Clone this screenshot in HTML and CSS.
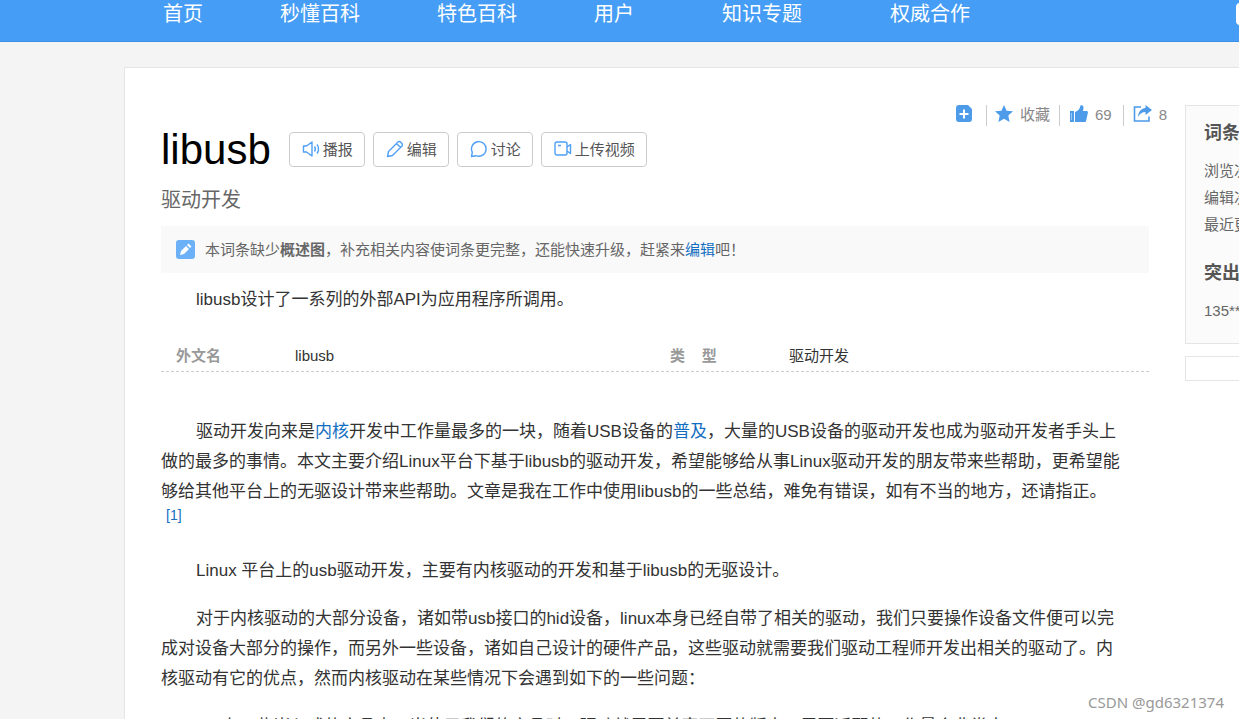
FILE: index.html
```html
<!DOCTYPE html>
<html lang="zh-CN">
<head>
  <meta charset="UTF-8" />
  <meta name="viewport" content="width=device-width, initial-scale=1.0" />
  <title>libusb</title>
  <link rel="stylesheet" href="styles.css">
</head>
<body>
  <header class="header">
    <nav class="nav">
      <a href="#">首页</a>
      <a href="#">秒懂百科</a>
      <a href="#">特色百科</a>
      <a href="#" class="wide">用户</a>
      <a href="#" class="wide">知识专题</a>
      <a href="#">权威合作</a>
    </nav>
    <div class="search"><input type="text" aria-label="搜索"></div>
  </header>

  <div class="page">
    <main class="main">
      <div class="tools">
        <a href="#" class="add" aria-label="添加">
          <svg width="16" height="17" viewBox="0 0 16 17"><path d="M3 0h9l4 4v10a3 3 0 0 1-3 3H3a3 3 0 0 1-3-3V3a3 3 0 0 1 3-3z" fill="#4e9bea"/><path d="M8 4.500v9M3.500 9h9" stroke="#fff" stroke-width="2"/></svg>
        </a>
        <a href="#" class="star">
          <svg width="18" height="17" viewBox="0 0 18 17"><path d="M9 0l2.600 5.700 6.400.6-4.700 4.300 1.300 6.400L9 13.700 3.400 17l1.300-6.400L0 6.300l6.400-.6z" fill="#4e9bea"/></svg>
          <span>收藏</span>
        </a>
        <a href="#" class="like">
          <svg width="18" height="18" viewBox="0 0 18 18"><path d="M0 6h4v11H0zM5 7c3-1 5-3 5.300-6.200C12-.3 13.800.8 13.500 3L13 6h3.500c1 0 1.600.8 1.400 1.800l-1.700 7.700c-.2 1-.8 1.500-1.700 1.500H5z" fill="#4e9bea"/><path d="M1.500 8v7" stroke="#9cc8f5"/></svg>
          <span>69</span>
        </a>
        <a href="#" class="share">
          <svg width="19" height="17" viewBox="0 0 19 17"><path d="M8 2H1.500v14H16v-4.500" fill="none" stroke="#4e9bea" stroke-width="1.600"/><path d="M12.500 0L19 5l-6.500 5V7C9 7 7 8.500 5 12c.3-5 3-8.500 7.500-9z" fill="#4e9bea"/></svg>
          <span>8</span>
        </a>
      </div>

      <div class="title-row">
        <h1>libusb</h1>
        <button type="button" class="btn">
          <svg width="18" height="18" viewBox="0 0 18 18"><path d="M1.500 6h3L10 2v14l-5.500-4h-3zM12.500 6.500c1 1.500 1 3.500 0 5M15 4.500c2 2.500 2 6.500 0 9"/></svg>播报
        </button>
        <button type="button" class="btn">
          <svg width="18" height="18" viewBox="0 0 18 18"><path d="M1.500 16.500l1-5L12 2c1.800-1.500 5.500 2 4 4l-9.500 9.500zM10.500 3.500l4 4"/></svg>编辑
        </button>
        <button type="button" class="btn">
          <svg width="18" height="18" viewBox="0 0 18 18"><path d="M1.500 16.500l.8-4.200A7.300 7.300 0 1 1 6 15.700z"/></svg>讨论
        </button>
        <button type="button" class="btn">
          <svg width="18" height="18" viewBox="0 0 18 18"><rect x="1" y="2" width="12" height="13" rx="2"/><path d="M4 5.500h3M13 7l3.500-2.500v9L13 11"/></svg>上传视频
        </button>
      </div>
      <h2 class="subtitle">驱动开发</h2>

      <div class="notice">
        <svg width="19" height="19" viewBox="0 0 19 19"><rect width="19" height="19" rx="3" fill="#6cb0f7"/><path d="M4 15l1-4 5-5 3 3-5 5zM11 5l1.500-1.500 3 3L14 8z" fill="#fff"/></svg>
        <p>本词条缺少<b>概述图</b>，补充相关内容使词条更完整，还能快速升级，赶紧来<a href="#">编辑</a>吧！</p>
      </div>

      <p class="intro">libusb设计了一系列的外部API为应用程序所调用。</p>

      <dl class="info">
        <div>
          <dt>外文名</dt>
          <dd>libusb</dd>
        </div>
        <div>
          <dt>类&nbsp;&nbsp;&nbsp;&nbsp;型</dt>
          <dd>驱动开发</dd>
        </div>
      </dl>

      <div class="content">
        <p>驱动开发向来是<a href="#">内核</a>开发中工作量最多的一块，随着USB设备的<a href="#">普及</a>，大量的USB设备的驱动开发也成为驱动开发者手头上<br>做的最多的事情。本文主要介绍Linux平台下基于libusb的驱动开发，希望能够给从事Linux驱动开发的朋友带来些帮助，更希望能<br>够给其他平台上的无驱设计带来些帮助。文章是我在工作中使用libusb的一些总结，难免有错误，如有不当的地方，还请指正。</p>
        <a href="#" class="cite">[1]</a>
        <p>Linux 平台上的usb驱动开发，主要有内核驱动的开发和基于libusb的无驱设计。</p>
        <p>对于内核驱动的大部分设备，诸如带usb接口的hid设备，linux本身已经自带了相关的驱动，我们只要操作设备文件便可以完<br>成对设备大部分的操作，而另外一些设备，诸如自己设计的硬件产品，这些驱动就需要我们驱动工程师开发出相关的驱动了。内<br>核驱动有它的优点，然而内核驱动在某些情况下会遇到如下的一些问题：</p>
        <p>1、在一些嵌入式的产品中，当使用我们的产品时，驱动就需要兼容不同的版本，需要适配的工作量会非常大。</p>
      </div>
    </main>

    <aside class="side">
      <div class="box">
        <h3>词条统计</h3>
        <ul>
          <li>浏览次数</li>
          <li>编辑次数</li>
          <li>最近更新</li>
        </ul>
        <h3>突出贡献榜</h3>
        <p>135****</p>
      </div>
      <div class="box small"></div>
    </aside>
  </div>

  <div class="watermark">CSDN @gd6321374</div>
</body>
</html>
```

FILE: styles.css
```css
* {
  margin: 0;
  padding: 0;
  box-sizing: border-box;
}
body {
  height: 100vh;
  overflow: hidden;
  background: #f4f4f4;
  color: #333;
  font-family: "Liberation Sans", "Noto Sans CJK SC", sans-serif;
}
a {
  color: #136ec2;
  text-decoration: none;
}
svg {
  flex: none;
}

.header {
  display: flex;
  justify-content: space-between;
  height: 42px;
  background: #459df5;
  border-bottom: 1px solid #3d8fe6;
}
.nav {
  display: flex;
  padding-left: 163px;
}
.nav a {
  margin-right: 77px;
  color: #fff;
  font-size: 20px;
  line-height: 28px;
  white-space: nowrap;
}
.nav a.wide {
  margin-right: 88px;
}
.search {
  width: 3px;
  padding-top: 3px;
  overflow: hidden;
}
.search input {
  width: 300px;
  height: 22px;
  border: 0;
  border-radius: 4px;
  background: #fff;
}

.page {
  display: grid;
  grid-template-columns: 1fr 54px;
  column-gap: 36px;
  margin: 25px 0 0 124px;
  padding: 37px 0 0 36px;
  background: #fff;
  border: 1px solid #e5e5e5;
  border-right: 0;
}
.main {
  min-width: 0;
}

.tools {
  display: flex;
  justify-content: flex-end;
  height: 21px;
  margin: 0 -18px 6px 0;
}
.tools a {
  display: flex;
  gap: 7px;
  padding: 0 9px 0 8px;
  color: #888;
  font-size: 15px;
  line-height: 20px;
  border-left: 1px solid #ccc;
}
.tools a.add {
  padding-right: 14px;
  border: 0;
}
.tools .like {
  padding: 0 11px 0 10px;
}
.tools .share {
  padding: 0 0 0 9px;
}

.title-row {
  display: flex;
  align-items: center;
  gap: 8px;
  height: 35px;
}
h1 {
  margin-right: 10px;
  color: #000;
  font-size: 42px;
  font-weight: normal;
  line-height: 36px;
}
.btn {
  display: flex;
  align-items: center;
  gap: 3px;
  height: 35px;
  padding: 0 11px 2px 12px;
  background: #fff;
  border: 1px solid #ccc;
  border-radius: 4px;
  color: #555;
  font-family: inherit;
  font-size: 15px;
  white-space: nowrap;
}
.btn svg {
  fill: none;
  stroke: #4e9ff5;
  stroke-width: 1.4;
  stroke-linejoin: round;
}
.subtitle {
  margin-top: 18px;
  color: #666;
  font-size: 20px;
  font-weight: normal;
  line-height: 30px;
}

.notice {
  display: flex;
  align-items: center;
  gap: 10px;
  height: 47px;
  margin-top: 11px;
  padding: 0 15px;
  background: #f9f9f9;
  color: #666;
  font-size: 15px;
}
.notice p {
  padding-bottom: 3px;
}
.intro {
  margin-top: 12px;
  text-indent: 35px;
  font-size: 17px;
  line-height: 30px;
}

.info {
  display: grid;
  grid-template-columns: 1fr 1fr;
  margin-top: 25px;
  border-bottom: 1px dashed #ccc;
  font-size: 15px;
  line-height: 31px;
}
.info div {
  display: flex;
  padding-left: 15px;
}
.info dt {
  width: 119px;
  color: #999;
  font-weight: bold;
}

.content {
  margin-top: 45px;
}
.content p {
  margin-bottom: 18px;
  text-indent: 35px;
  font-size: 17px;
  line-height: 30px;
  white-space: nowrap;
}
.content .cite {
  display: block;
  margin: -20px 0 31px 5px;
  font-size: 14px;
  line-height: 20px;
}

.side {
  overflow: hidden;
  white-space: nowrap;
}
.box {
  height: 239px;
  padding: 14px 18px;
  background: #fbfbfb;
  border: 1px solid #e5e5e5;
  border-right: 0;
  color: #666;
  font-size: 15px;
  line-height: 27px;
}
.box h3 {
  margin-bottom: 10px;
  color: #555;
  font-size: 18px;
  line-height: 27px;
}
.box ul {
  margin-bottom: 22px;
  list-style: none;
}
.box.small {
  height: 25px;
  margin-top: 12px;
  padding: 0;
  background: #fff;
}

.watermark {
  position: absolute;
  right: 15px;
  bottom: 7px;
  color: #999;
  font-family: "Noto Sans", sans-serif;
  font-size: 15px;
  line-height: 20px;
}
```
